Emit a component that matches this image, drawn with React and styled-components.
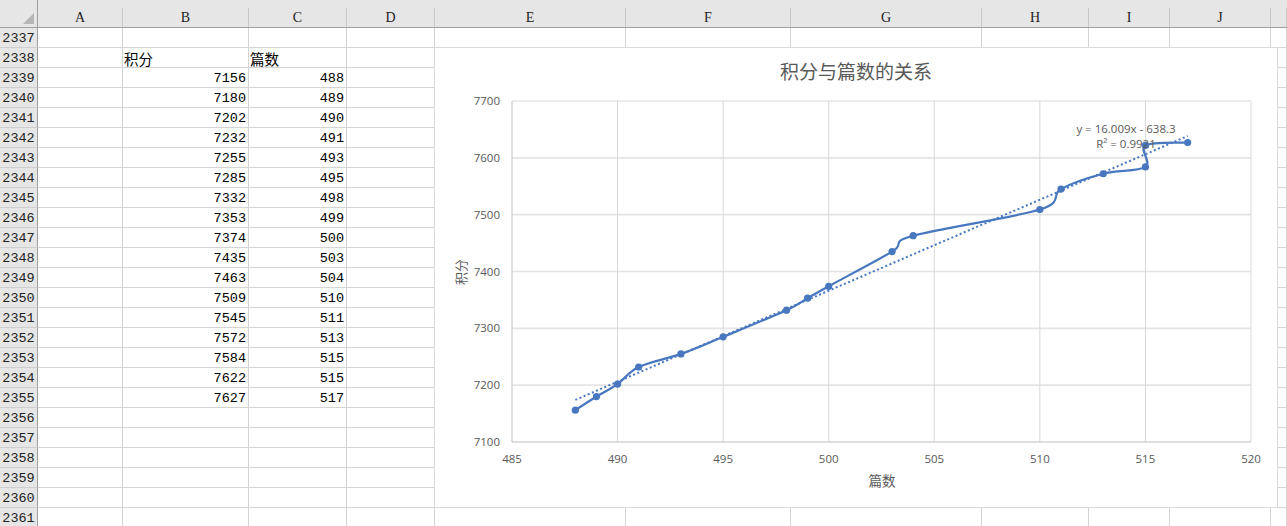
import React from "react";
import styled, { createGlobalStyle } from "styled-components";

const GlobalStyle = createGlobalStyle`
  html, body {
    margin: 0;
    padding: 0;
    background: #fff;
    overflow: hidden;
  }
`;

const TEMPLATE = "38px 85px 126px 98px 88px 191px 165px 191px 107px 81px 101px 1fr";
const LETTERS = ["A", "B", "C", "D", "E", "F", "G", "H", "I", "J", ""];

const DATA = [
  [7156, 488], [7180, 489], [7202, 490], [7232, 491], [7255, 493],
  [7285, 495], [7332, 498], [7353, 499], [7374, 500], [7435, 503],
  [7463, 504], [7509, 510], [7545, 511], [7572, 513], [7584, 515],
  [7622, 515], [7627, 517],
];

const Sheet = styled.div`
  position: relative;
  width: 100%;
  height: 526px;
  overflow: hidden;
  background: #fff;
`;

const HeaderRow = styled.div`
  display: grid;
  grid-template-columns: ${TEMPLATE};
  height: 28px;
  box-sizing: border-box;
  background: #e6e6e6;
  border-bottom: 1px solid #9f9f9f;
`;

const HeaderCell = styled.div`
  align-self: end;
  height: 19px;
  line-height: 19px;
  box-sizing: border-box;
  border-right: 1px solid #c8c8c8;
  text-align: center;
  font-family: "Liberation Serif", serif;
  font-size: 14px;
  color: #222;
`;

const Corner = styled.div`
  position: relative;
  border-right: 1px solid #9f9f9f;

  &::after {
    content: "";
    position: absolute;
    right: 3px;
    bottom: 3px;
    border-left: 11px solid transparent;
    border-bottom: 11px solid #b5b5b5;
  }
`;

const Row = styled.div`
  display: grid;
  grid-template-columns: ${TEMPLATE};
  height: 20px;
`;

const RowNumber = styled.div`
  box-sizing: border-box;
  background: #e6e6e6;
  border-right: 1px solid #9f9f9f;
  border-bottom: 1px solid #cfcfcf;
  text-align: center;
  font-family: "Liberation Mono", monospace;
  font-size: 13.5px;
  line-height: 21px;
  color: #222;
  overflow: hidden;
`;

const Cell = styled.div`
  box-sizing: border-box;
  border-right: 1px solid #d4d4d4;
  border-bottom: 1px solid #d4d4d4;
  padding: 0 2px 0 1px;
  text-align: ${(p) => (p.$num ? "right" : "left")};
  font-family: ${(p) =>
    p.$num ? '"Liberation Mono", monospace' : '"Noto Sans CJK SC", sans-serif'};
  font-size: ${(p) => (p.$num ? "13.5px" : "14.5px")};
  line-height: 21px;
  color: #000;
  white-space: nowrap;
  overflow: hidden;
`;

const ChartFrame = styled.div`
  position: absolute;
  left: 434px;
  top: 47px;
  width: 844px;
  height: 461px;
  box-sizing: border-box;
  border: 1px solid #d9d9d9;
  background: #fff;
  display: flex;
  flex-direction: column;
`;

const ChartTitle = styled.div`
  height: 46px;
  line-height: 46px;
  text-align: center;
  font-family: "Noto Sans CJK SC", sans-serif;
  font-size: 19px;
  color: #595959;
`;

const Plot = styled.svg`
  display: block;
  flex: 1;
  font-family: "Open Sans", sans-serif;
`;

// plot area inside the svg
const PX0 = 77, PX1 = 816, PY0 = 7, PY1 = 348;
const sx = (v) => PX0 + ((v - 485) * (PX1 - PX0)) / 35;
const sy = (v) => PY1 - ((v - 7100) * (PY1 - PY0)) / 600;

function smoothPath(pts) {
  let d = `M${pts[0][0]},${pts[0][1]}`;
  for (let i = 0; i < pts.length - 1; i++) {
    const p0 = pts[i - 1] || pts[i];
    const p1 = pts[i];
    const p2 = pts[i + 1];
    const p3 = pts[i + 2] || p2;
    const c1x = p1[0] + (p2[0] - p0[0]) / 6;
    const c1y = p1[1] + (p2[1] - p0[1]) / 6;
    const c2x = p2[0] - (p3[0] - p1[0]) / 6;
    const c2y = p2[1] - (p3[1] - p1[1]) / 6;
    d += ` C${c1x},${c1y} ${c2x},${c2y} ${p2[0]},${p2[1]}`;
  }
  return d;
}

function ScoreChart() {
  const xTicks = [485, 490, 495, 500, 505, 510, 515, 520];
  const yTicks = [7100, 7200, 7300, 7400, 7500, 7600, 7700];
  const pts = DATA.map(([score, count]) => [sx(count), sy(score)]);
  const trend = (x) => 16.009 * x - 638.3;
  const blue = "#4677bf";

  return (
    <ChartFrame>
      <ChartTitle>积分与篇数的关系</ChartTitle>
      <Plot width="842" height="413" viewBox="0 0 842 413">
        {yTicks.slice(1).map((t) => (
          <line key={t} x1={PX0} x2={PX1} y1={sy(t)} y2={sy(t)} stroke="#e4e4e4" strokeWidth="1.6" />
        ))}
        {xTicks.slice(1).map((t) => (
          <line key={t} x1={sx(t)} x2={sx(t)} y1={PY0} y2={PY1} stroke="#d9d9d9" strokeWidth="1" />
        ))}
        <line x1={PX0} x2={PX0} y1={PY0} y2={PY1} stroke="#bfbfbf" strokeWidth="1" />
        <line x1={PX0} x2={PX1} y1={PY1} y2={PY1} stroke="#bfbfbf" strokeWidth="1" />

        {yTicks.map((t) => (
          <text key={t} x="65" y={sy(t) + 4} textAnchor="end" fontSize="11.5" fill="#595959">
            {t}
          </text>
        ))}
        {xTicks.map((t) => (
          <text key={t} x={sx(t)} y="369" textAnchor="middle" fontSize="11.5" fill="#595959">
            {t}
          </text>
        ))}

        <text
          x="25"
          y="178"
          transform="rotate(-90 25 178)"
          textAnchor="middle"
          dominantBaseline="central"
          fontSize="13"
          fill="#595959"
          fontFamily='"Noto Sans CJK SC", sans-serif'
        >
          积分
        </text>
        <text
          x="447"
          y="386"
          textAnchor="middle"
          dominantBaseline="central"
          fontSize="13.5"
          fill="#595959"
          fontFamily='"Noto Sans CJK SC", sans-serif'
        >
          篇数
        </text>

        <line
          x1={sx(488)}
          y1={sy(trend(488))}
          x2={sx(517)}
          y2={sy(trend(517))}
          stroke={blue}
          strokeWidth="2"
          strokeDasharray="2 2.5"
        />
        <path d={smoothPath(pts)} fill="none" stroke={blue} strokeWidth="2.2" />
        {pts.map(([x, y], i) => (
          <circle key={i} cx={x} cy={y} r="3.6" fill={blue} />
        ))}

        <text x="691" y="39" textAnchor="middle" fontSize="11.5" fill="#595959">
          y = 16.009x - 638.3
        </text>
        <text x="691" y="54" textAnchor="middle" fontSize="11.5" fill="#595959">
          R² = 0.9921
        </text>
      </Plot>
    </ChartFrame>
  );
}

function buildRows() {
  const rows = [];
  for (let n = 2337; n <= 2361; n++) {
    let b = "", c = "", num = false;
    if (n === 2338) {
      b = "积分";
      c = "篇数";
    } else if (n >= 2339 && n <= 2355) {
      [b, c] = DATA[n - 2339];
      num = true;
    }
    rows.push({ n, b, c, num });
  }
  return rows;
}

export default function App() {
  const rows = buildRows();
  return (
    <>
      <GlobalStyle />
      <Sheet>
        <HeaderRow>
          <Corner />
          {LETTERS.map((l, i) => (
            <HeaderCell key={i}>{l}</HeaderCell>
          ))}
        </HeaderRow>
        {rows.map((r) => (
          <Row key={r.n}>
            <RowNumber>{r.n}</RowNumber>
            <Cell />
            <Cell $num={r.num}>{r.b}</Cell>
            <Cell $num={r.num}>{r.c}</Cell>
            {Array.from({ length: 8 }).map((_, i) => (
              <Cell key={i} />
            ))}
          </Row>
        ))}
        <ScoreChart />
      </Sheet>
    </>
  );
}
